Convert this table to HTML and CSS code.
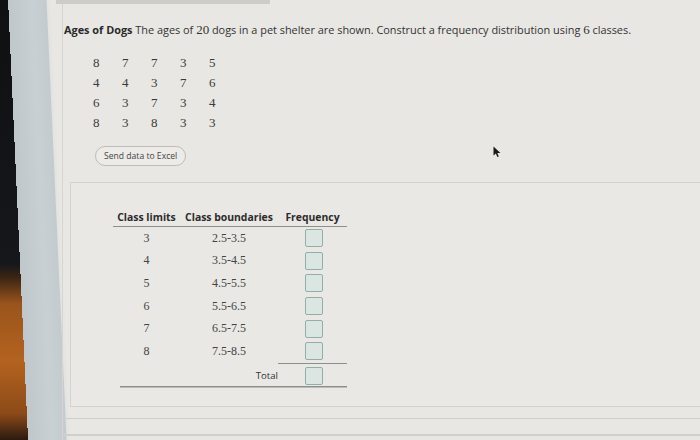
FILE: index.html
```html
<!DOCTYPE html>
<html>
<head>
<meta charset="utf-8">
<link rel="stylesheet" href="styles.css">
</head>
<body>
<div class="frame">
  <div class="page">
    <div class="topbar"></div>
    <div class="content">
      <p class="question"><b>Ages of Dogs</b> The ages of <span class="math">20</span> dogs in a pet shelter are shown. Construct a frequency distribution using <span class="math">6</span> classes.</p>
      <div class="data">
        <span>8</span><span>7</span><span>7</span><span>3</span><span>5</span>
        <span>4</span><span>4</span><span>3</span><span>7</span><span>6</span>
        <span>6</span><span>3</span><span>7</span><span>3</span><span>4</span>
        <span>8</span><span>3</span><span>8</span><span>3</span><span>3</span>
      </div>
      <button class="excel">Send data to Excel</button>
      <div class="panel">
        <table class="freq">
          <colgroup><col class="w1"><col class="w2"><col class="w3"></colgroup>
          <thead>
            <tr><th>Class limits</th><th>Class boundaries</th><th>Frequency</th></tr>
          </thead>
          <tbody>
            <tr><td class="lim">3</td><td class="bnd">2.5-3.5</td><td class="box"><span class="input"></span></td></tr>
            <tr><td class="lim">4</td><td class="bnd">3.5-4.5</td><td class="box"><span class="input"></span></td></tr>
            <tr><td class="lim">5</td><td class="bnd">4.5-5.5</td><td class="box"><span class="input"></span></td></tr>
            <tr><td class="lim">6</td><td class="bnd">5.5-6.5</td><td class="box"><span class="input"></span></td></tr>
            <tr><td class="lim">7</td><td class="bnd">6.5-7.5</td><td class="box"><span class="input"></span></td></tr>
            <tr class="last"><td class="lim">8</td><td class="bnd">7.5-8.5</td><td class="box"><span class="input"></span></td></tr>
            <tr class="total"><td class="tfirst"></td><td class="tlabel">Total</td><td class="box"><span class="input"></span></td></tr>
          </tbody>
        </table>
      </div>
      <div class="footer-lines"></div>
    </div>
    <svg class="cursor" width="8" height="12" viewBox="0 0 8 12"><path d="M0.5 0.5 L0.5 9.5 L2.8 7.4 L4.4 11 L5.8 10.4 L4.3 6.9 L7.4 6.9 Z" fill="#1a1a1a"/></svg>
  </div>
</div>
</body>
</html>
```
FILE: styles.css
```css
html, body {
  margin: 0;
  padding: 0;
  width: 700px;
  height: 440px;
  overflow: hidden;
  background: #e8e7e3;
}
.frame {
  display: flex;
  height: 440px;
  background:
    linear-gradient(87.4deg, transparent 0 28px, #c0c7cb 28px, #c9d0d3 52px, #c4cbce 66px, #e2e3e1 67px, #e8e7e3 71px),
    linear-gradient(180deg, #0f1012 0%, #16171a 60%, #3a2414 63%, #9a541c 69%, #b4631f 82%, #8c4a18 94%, #2a1a10 100%);
}
.page {
  flex: 1;
  margin-left: 56px;
  padding-left: 6px;
  position: relative;
}
.topbar {
  width: 214px;
  height: 4px;
  background: #cdccc9;
  margin-left: -6px;
}
.content {
  border-left: 1px solid #d6d5d1;
  height: 436px;
  padding-left: 1px;
  font-family: "Open Sans", "Liberation Sans", sans-serif;
  color: #2e2e2e;
}
.question {
  margin: 0;
  padding-top: 19px;
  font-size: 10.9px;
  line-height: 14px;
  white-space: nowrap;
  color: #333;
}
.question b {
  font-weight: 700;
  color: #2a2a2a;
}
.math {
  font-family: "Liberation Serif", "Times New Roman", serif;
  font-size: 13px;
}
.data {
  display: grid;
  grid-template-columns: repeat(5, 29px);
  grid-auto-rows: 20px;
  margin: 16px 0 0 29px;
  font-family: "Liberation Serif", "Times New Roman", serif;
  font-size: 13px;
  color: #3a3a3a;
}
.data span {
  line-height: 20px;
}
.excel {
  display: block;
  margin: 13px 0 0 31px;
  height: 20px;
  padding: 0 8px;
  border: 1px solid #bdbcb8;
  border-radius: 10px;
  background: #ecebe8;
  font-family: "Open Sans", "Liberation Sans", sans-serif;
  font-size: 8.6px;
  color: #444;
}
.panel {
  margin: 16px 0 0 6px;
  border: 1px solid #d4d3cf;
  border-right: none;
  height: 196px;
  padding: 27px 0 0 42px;
  background: #e9e8e4;
}
.freq {
  border-collapse: collapse;
  table-layout: fixed;
  width: 234px;
  font-size: 10.4px;
}
.w1 { width: 67px; }
.w2 { width: 98px; }
.w3 { width: 69px; }
.freq th {
  font-weight: 700;
  color: #2c2c2c;
  padding: 0 0 2px 0;
  border-bottom: 1.5px solid #8e8e8c;
  white-space: nowrap;
  line-height: 14px;
  text-align: center;
}
.freq td {
  height: 22.6px;
  padding: 0;
  font-family: "Liberation Serif", "Times New Roman", serif;
  font-size: 12px;
  color: #444;
  text-align: center;
}
.freq td.box {
  text-align: left;
  padding-left: 27px;
}
.input {
  display: block;
  box-sizing: border-box;
  width: 18px;
  height: 18px;
  border: 1.5px solid #8fb0a9;
  border-radius: 2px;
  background: #dbe5e2;
}
.freq tr.last td.box {
  border-bottom: 1px solid #8e8e8c;
}
.freq tr.total td {
  height: 24px;
  background: linear-gradient(#8e8e8c, #8e8e8c) 0 100% / 100% 1.5px no-repeat;
}
.freq tr.total td.tfirst {
  background: linear-gradient(#8e8e8c, #8e8e8c) 7px 100% / calc(100% - 7px) 1.5px no-repeat;
}
.freq td.tlabel {
  font-family: "Open Sans", "Liberation Sans", sans-serif;
  font-size: 9.6px;
  text-align: right;
  padding-right: 0;
  color: #333;
}
.footer-lines {
  margin-top: 11px;
  border-top: 1px solid #cfcecb;
  height: 15px;
  border-bottom: 2px solid #d0cfcb;
}
.cursor {
  position: absolute;
  left: 437px;
  top: 146px;
}
```
